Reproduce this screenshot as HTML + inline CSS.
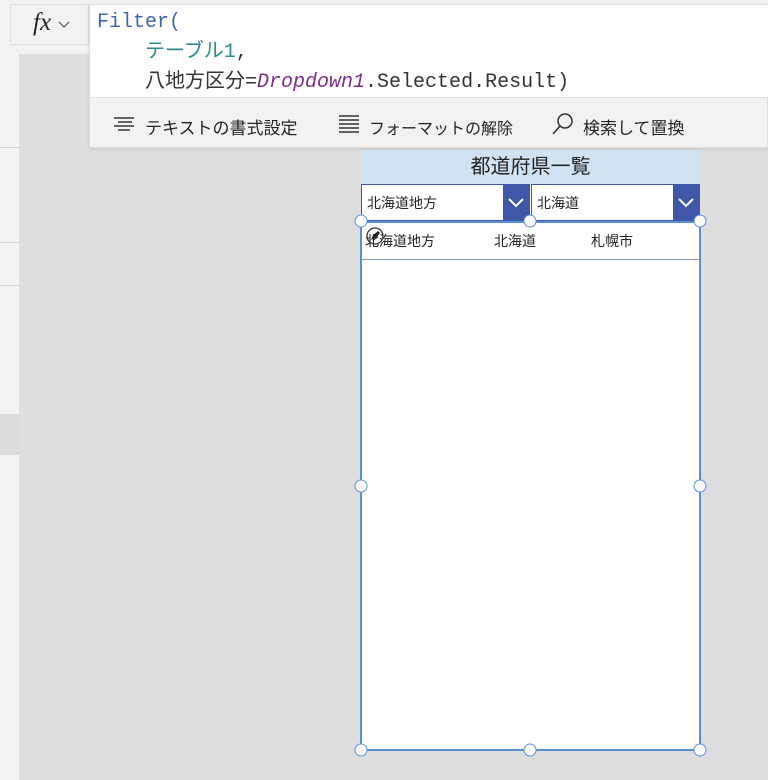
<!DOCTYPE html>
<html><head><meta charset="utf-8"><style>
*{margin:0;padding:0;box-sizing:border-box}
body{width:768px;height:780px;overflow:hidden;background:#dedede;position:relative;font-family:"Liberation Sans","Noto Sans CJK JP",sans-serif;color:#252423}
.a{position:absolute}
.mono{font-family:"Liberation Mono","Noto Sans CJK JP",monospace;font-size:20px;line-height:30px;white-space:pre}
.h{position:absolute;width:13px;height:13px;border-radius:50%;background:#fff;border:1.5px solid #5a8fd6;transform:translate(-50%,-50%)}
</style></head><body>
<div class="a" style="left:0;top:0;width:768px;height:54px;background:#f3f2f1"></div>
<div class="a" style="left:0;top:54px;width:20px;height:726px;background:#f3f2f1;border-right:1px solid #e1dfdd"></div>
<div class="a" style="left:0;top:147px;width:20px;height:1px;background:#d6d4d2"></div>
<div class="a" style="left:0;top:242px;width:20px;height:1px;background:#d6d4d2"></div>
<div class="a" style="left:0;top:285px;width:20px;height:1px;background:#d6d4d2"></div>
<div class="a" style="left:0;top:414px;width:20px;height:41px;background:#dcdcdc"></div>
<div class="a" style="left:10px;top:4px;width:79px;height:41px;border:1px solid #e1dfdd;background:#f3f2f1"></div>
<div class="a" style="left:33px;top:9px;font-family:'Liberation Serif',serif;font-style:italic;font-size:25px">fx</div>
<svg class="a" style="left:57px;top:19px" width="14" height="10"><path d="M2 3l5 5 5-5" fill="none" stroke="#555" stroke-width="1.2"/></svg>
<div class="a" style="left:89px;top:4px;width:679px;height:144px;background:#f3f2f1;border:1px solid #e1dfdd;box-shadow:0 1px 3px rgba(0,0,0,.12)"></div>
<div class="a" style="left:90px;top:5px;width:678px;height:93px;background:#fff;border-bottom:1px solid #e1dfdd"></div>
<div class="a mono" style="left:97px;top:8px;color:#3b66b0">Filter(</div>
<div class="a mono" style="left:145px;top:38px;color:#2e8b8b">テーブル1<span style="color:#333">,</span></div>
<div class="a mono" style="left:145px;top:68px;color:#333">八地方区分=<i style="color:#7a2e8a">Dropdown1</i>.Selected.Result)</div>
<svg class="a" style="left:113px;top:116px" width="22" height="16"><path d="M1 2h20M5 6h14M1 10h20M5 14h12" stroke="#333" stroke-width="1.4"/></svg>
<div class="a" style="left:145px;top:114px;font-size:17px">テキストの書式設定</div>
<svg class="a" style="left:338px;top:114px" width="22" height="20"><path d="M1 2h20M1 6h20M1 10h20M1 14h20M1 18h20" stroke="#333" stroke-width="1.5"/></svg>
<div class="a" style="left:369px;top:115px;font-size:16px">フォーマットの解除</div>
<svg class="a" style="left:551px;top:112px" width="24" height="24"><circle cx="14" cy="9" r="7" fill="none" stroke="#333" stroke-width="1.5"/><path d="M9 14l-7 8" stroke="#333" stroke-width="1.6"/></svg>
<div class="a" style="left:583px;top:114px;font-size:17px">検索して置換</div>
<div class="a" style="left:361px;top:150px;width:339px;height:600px;background:#fff"></div>
<div class="a" style="left:361px;top:150px;width:339px;height:34px;background:#cfe3f3;text-align:center;font-size:20px;line-height:34px">都道府県一覧</div>
<div class="a" style="left:361px;top:184px;width:169px;height:37px;border:1px solid #3f57a8;background:#fff"></div>
<div class="a" style="left:367px;top:193px;font-size:14px">北海道地方</div>
<div class="a" style="left:503px;top:184px;width:27px;height:37px;background:#3f57a8"></div>
<svg class="a" style="left:506px;top:195px" width="20" height="14"><path d="M3 4l7 7 7-7" fill="none" stroke="#fff" stroke-width="2"/></svg>
<div class="a" style="left:531px;top:184px;width:169px;height:37px;border:1px solid #3f57a8;background:#fff"></div>
<div class="a" style="left:537px;top:193px;font-size:14px">北海道</div>
<div class="a" style="left:673px;top:184px;width:27px;height:37px;background:#3f57a8"></div>
<svg class="a" style="left:676px;top:195px" width="20" height="14"><path d="M3 4l7 7 7-7" fill="none" stroke="#fff" stroke-width="2"/></svg>
<div class="a" style="left:360px;top:221px;width:341px;height:530px;border:2px solid #5a8fd6"></div>
<div class="a" style="left:362px;top:259px;width:337px;height:1px;background:#8a9ab5"></div>
<div class="a" style="left:365px;top:231px;font-size:14px">北海道地方</div>
<div class="a" style="left:494px;top:231px;font-size:14px">北海道</div>
<div class="a" style="left:591px;top:231px;font-size:14px">札幌市</div>
<svg class="a" style="left:365px;top:226px" width="20" height="20"><circle cx="10" cy="10" r="8" fill="none" stroke="#333" stroke-width="1.3"/><path d="M6 14l2-5 5-4 2 2-4 5z" fill="#222"/></svg>
<div class="h" style="left:361px;top:221px"></div><div class="h" style="left:530px;top:221px"></div><div class="h" style="left:700px;top:221px"></div>
<div class="h" style="left:361px;top:486px"></div><div class="h" style="left:700px;top:486px"></div>
<div class="h" style="left:361px;top:750px"></div><div class="h" style="left:530px;top:750px"></div><div class="h" style="left:700px;top:750px"></div>
</body></html>
